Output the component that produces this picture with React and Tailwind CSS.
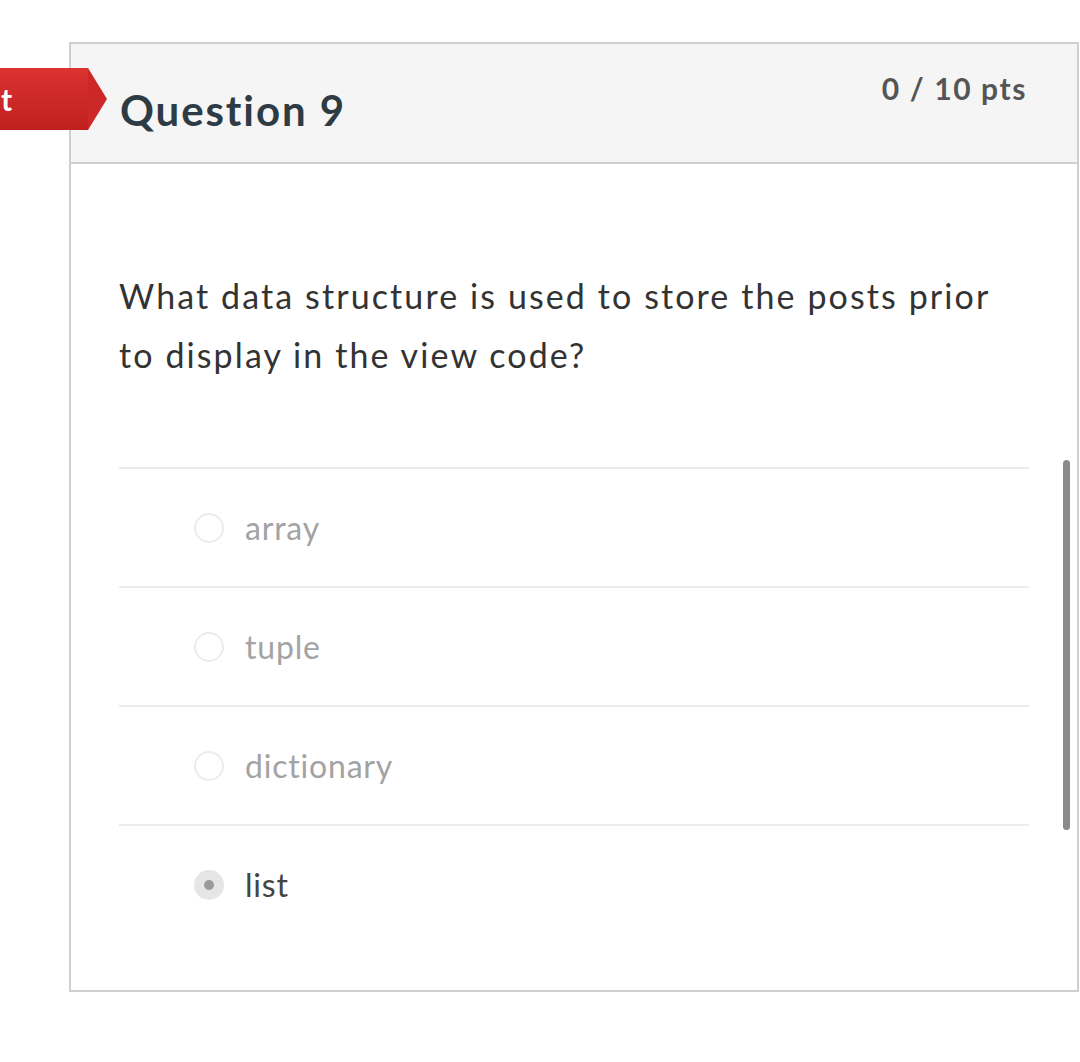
const options = [
  { label: 'array', selected: false },
  { label: 'tuple', selected: false },
  { label: 'dictionary', selected: false },
  { label: 'list', selected: true },
]

function Radio({ selected }) {
  if (selected) {
    return (
      <span className="flex h-[30px] w-[30px] items-center justify-center rounded-full bg-[#e6e6e6]">
        <span className="h-[10px] w-[10px] rounded-full bg-[#9a9a9a]" />
      </span>
    )
  }
  return <span className="h-[30px] w-[30px] rounded-full border-2 border-[#ececec] bg-white" />
}

export default function App() {
  return (
    <div className="relative min-h-[1062px] w-[1080px] overflow-hidden bg-white pl-[69px] pt-[42px]" style={{ fontFamily: 'Lato, "Open Sans", sans-serif' }}>
      {/* red flag tab */}
      <div className="absolute left-0 top-[68px] flex h-[62px] items-center">
        <div className="flex h-full w-[88px] items-center bg-gradient-to-b from-[#dc3232] to-[#bf1f1f] pl-[1px] text-[30px] font-bold text-white">
          t
        </div>
        <div className="h-0 w-0 border-y-[31px] border-l-[19px] border-y-transparent border-l-[#cc2828]" />
      </div>

      <div className="w-[1010px] border-2 border-[#cfcfcf]">
        <div className="flex h-[120px] justify-between border-b-2 border-[#cfcfcf] bg-[#f5f5f5] pl-[49px] pr-[50px]">
          <h2 className="pt-[42px] text-[42px] font-bold leading-[48px] tracking-[1.9px] text-[#2d3b45]">Question 9</h2>
          <div className="pt-[27px] text-[30px] font-bold leading-[34px] tracking-[1.6px] text-[#555]">0 / 10 pts</div>
        </div>

        <div className="px-[48px] pb-[47px] pt-[102px]">
          <p className="pr-[20px] text-[34px] leading-[59px] tracking-[2.1px] text-[#333]">
            What data structure is used to store the posts prior to display in the view code?
          </p>
          <div className="mt-[83px]">
            {options.map((o) => (
              <div key={o.label} className="flex h-[119px] items-center gap-[21px] border-t-2 border-[#ececec] pl-[75px]">
                <Radio selected={o.selected} />
                <span className={`text-[32px] leading-none tracking-[0.8px] ${o.selected ? 'text-[#444]' : 'text-[#a3a3a3]'}`}>{o.label}</span>
              </div>
            ))}
          </div>
        </div>
      </div>

      {/* scrollbar thumb */}
      <div className="absolute left-[1063px] top-[460px] h-[370px] w-[7px] rounded-full bg-[#8a8a8a]" />
    </div>
  )
}
